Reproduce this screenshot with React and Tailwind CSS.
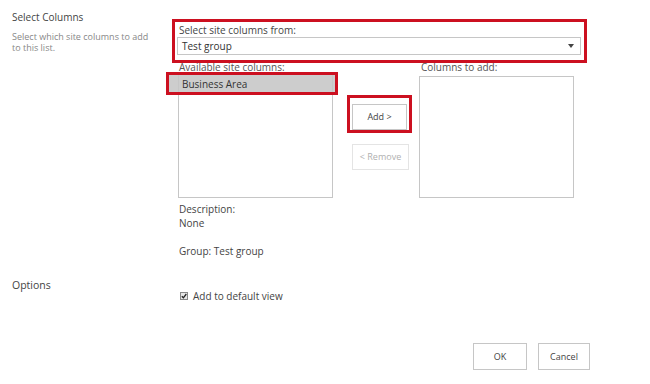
import React from "react";

export default function App() {
  return (
    <div className="relative isolate w-[650px] h-[384px] bg-white overflow-hidden font-['Open_Sans',sans-serif] text-[#444]">
      {/* Select Columns section */}
      <div className="flex">
        <div className="w-[177px] pl-[12px] shrink-0">
          <div className="mt-[10px] text-[10px] leading-[14px] text-[#444]">Select Columns</div>
          <div className="mt-[7px] text-[9px] leading-[11px] text-[#888] w-[143px]">
            Select which site columns to add to this list.
          </div>
        </div>
        <div className="w-[404px] flex flex-col">
          <div className="mt-[24px] pl-[2px] text-[10px] leading-[12px] text-[#444]">Select site columns from:</div>
          <div className="mt-[1px] h-[18px] border border-[#c6c6c6] flex items-center justify-between pl-[4px] pr-[6px]">
            <span className="text-[10px] leading-[12px] text-[#333]">Test group</span>
            <svg width="6" height="4" viewBox="0 0 6 4">
              <path d="M0 0 L6 0 L3 4 Z" fill="#444" />
            </svg>
          </div>
          <div className="mt-[6px] flex">
            <div className="w-[156px] flex flex-col">
              <div className="pl-[2px] text-[10px] leading-[12px] text-[#555]">Available site columns:</div>
              <div className="mt-[2px] ml-[1px] w-[155px] h-[123px] border border-t-0 border-[#c6c6c6] pt-[1px] px-[1px]">
                <div className="h-[16px] bg-[#cdcdcd] pl-[2px] text-[10px] leading-[16px] text-[#333]">Business Area</div>
              </div>
            </div>
            <div className="ml-[19px] w-[57px] flex flex-col pt-[43px]">
              <div className="w-[55px] h-[26px] border border-[#c6c6c6] flex items-center justify-center text-[9px] text-[#444]">Add &gt;</div>
              <div className="mt-[14px] w-[57px] h-[26px] border border-[#e4e4e4] flex items-center justify-center text-[9px] text-[#b0b0b0]">&lt; Remove</div>
            </div>
            <div className="ml-[10px] flex flex-col">
              <div className="pl-[2px] text-[10px] leading-[12px] text-[#555]">Columns to add:</div>
              <div className="mt-[3px] w-[155px] h-[122px] border border-[#c6c6c6]" />
            </div>
          </div>
          <div className="mt-[4px] pl-[2px] text-[10px] leading-[14px] text-[#444]">
            <div>Description:</div>
            <div>None</div>
            <div className="mt-[14px]">Group: Test group</div>
          </div>
        </div>
      </div>

      {/* Options section */}
      <div className="flex mt-[20px]">
        <div className="w-[177px] pl-[12px] shrink-0 text-[10.5px] leading-[14px] text-[#444]">Options</div>
        <div className="mt-[11px] pl-[3px] flex items-center gap-[5px] text-[10px] leading-[14px] text-[#444]">
          <span className="w-[8px] h-[8px] border border-[#888] bg-[#e6e6e6] flex items-center justify-center">
            <svg width="6" height="6" viewBox="0 0 6 6">
              <path d="M0.8 3.2 L2.4 4.8 L5.3 1" stroke="#222" strokeWidth="1.3" fill="none" />
            </svg>
          </span>
          <span>Add to default view</span>
        </div>
      </div>

      {/* Buttons */}
      <div className="flex justify-end pr-[60px] mt-[40px] gap-[11px]">
        <div className="w-[54px] h-[27px] border border-[#c6c6c6] flex items-center justify-center text-[9px] text-[#444]">OK</div>
        <div className="w-[52px] h-[27px] border border-[#c6c6c6] flex items-center justify-center text-[9px] text-[#444]">Cancel</div>
      </div>

      {/* Red annotation boxes */}
      <div className="absolute left-[172px] top-[19px] w-[415px] h-[44px] border-[3px] border-[#cc1020]" />
      <div className="absolute -z-10 left-[166px] top-[72px] w-[172px] h-[23px] border-[3px] border-[#cc1020] bg-[#cdcdcd]" />
      <div className="absolute left-[166px] top-[72px] w-[172px] h-[23px] border-[3px] border-[#cc1020]" />
      <div className="absolute left-[347px] top-[95px] w-[65px] h-[38px] border-[3px] border-[#cc1020]" />
    </div>
  );
}
